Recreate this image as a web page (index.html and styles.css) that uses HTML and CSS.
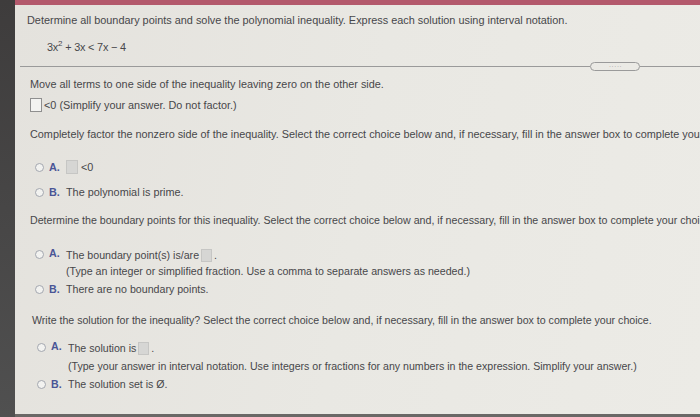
FILE: index.html
```html
<!DOCTYPE html>
<html lang="en">
<head>
<meta charset="utf-8">
<title>Polynomial inequality</title>
<link rel="stylesheet" href="styles.css">
</head>
<body>
<div class="screen">
  <div class="bezel"></div>
  <div class="page">
    <div class="topbar"></div>
    <div class="content">
      <div class="sec s1">
        <p class="line l1">Determine all boundary points and solve the polynomial inequality. Express each solution using interval notation.</p>
        <p class="line eq">3x<sup>2</sup> + 3x &lt; 7x − 4</p>
      </div>
      <div class="divider"><span class="rule short"></span><span class="pill">· · · · ·</span><span class="rule"></span></div>
      <div class="sec s2">
        <p class="line move">Move all terms to one side of the inequality leaving zero on the other side.</p>
        <p class="line simp"><span class="ansbox white"></span>&lt;0 (Simplify your answer. Do not factor.)</p>
        <p class="line q">Completely factor the nonzero side of the inequality. Select the correct choice below and, if necessary, fill in the answer box to complete your choice.</p>
        <div class="choice c1"><span class="radio"></span><span class="lbl">A.</span><span class="ansbox"></span><span>&lt;0</span></div>
        <div class="choice c2"><span class="radio"></span><span class="lbl">B.</span><span>The polynomial is prime.</span></div>
      </div>
      <div class="sec s3">
        <p class="line q q2">Determine the boundary points for this inequality. Select the correct choice below and, if necessary, fill in the answer box to complete your choice.</p>
        <div class="choice c3"><span class="radio"></span><span class="lbl">A.</span><div class="body"><div class="row">The boundary point(s) is/are <span class="ansbox small"></span>.</div><div class="row hint">(Type an integer or simplified fraction. Use a comma to separate answers as needed.)</div></div></div>
        <div class="choice c4"><span class="radio"></span><span class="lbl">B.</span><span>There are no boundary points.</span></div>
      </div>
      <div class="sec s4">
        <p class="line q q3">Write the solution for the inequality? Select the correct choice below and, if necessary, fill in the answer box to complete your choice.</p>
        <div class="choice c5"><span class="radio"></span><span class="lbl">A.</span><div class="body"><div class="row">The solution is <span class="ansbox small"></span>.</div><div class="row hint">(Type your answer in interval notation. Use integers or fractions for any numbers in the expression. Simplify your answer.)</div></div></div>
        <div class="choice c6"><span class="radio"></span><span class="lbl">B.</span><span>The solution set is Ø.</span></div>
      </div>
    </div>
    <div class="bottom"></div>
  </div>
</div>
</body>
</html>
```
FILE: styles.css
```css
html, body {
  margin: 0;
  padding: 0;
  width: 700px;
  height: 417px;
  overflow: hidden;
  background: #e8e6e1;
}
.screen {
  display: flex;
  width: 700px;
  height: 417px;
  font-family: "Liberation Sans", Arial, sans-serif;
  color: #47474a;
  font-size: 11px;
}
.bezel {
  width: 15px;
  flex: none;
  background: linear-gradient(to bottom, #3e3c3c, #505050);
}
.page {
  flex: 1;
  display: flex;
  flex-direction: column;
  background: linear-gradient(100deg, #e4e2dd 0%, #e9e8e3 50%, #ecebe6 100%);
  overflow: hidden;
}
.topbar {
  height: 5px;
  flex: none;
  background: #b3596c;
}
.content {
  flex: 1;
  padding-left: 12px;
  white-space: nowrap;
  overflow: hidden;
}
.s1 { font-size: 10.9px; }
.s2 { font-size: 10.85px; }
.s3 { font-size: 10.65px; }
.s4 { font-size: 10.6px; }
.bottom {
  height: 3px;
  background: #6a6866;
  flex: none;
}
.line {
  margin: 0;
  line-height: 13px;
}
.l1 { margin-top: 9px; }
.eq { margin-top: 14px; padding-left: 20px; letter-spacing: -0.2px; }
.eq sup { font-size: 8px; line-height: 0; }
.divider {
  display: flex;
  align-items: center;
  margin-top: 8px;
  height: 9px;
  margin-left: -7px;
}
.rule { flex: 1; height: 1px; background: #9a9a9a; }
.rule.short { flex: none; width: 570px; }
.pill {
  flex: none;
  width: 48px;
  height: 7px;
  border: 1px solid #9a9a9a;
  border-radius: 5px;
  font-size: 6px;
  line-height: 7px;
  text-align: center;
  color: #777;
  letter-spacing: -0.5px;
}
.move { margin-top: 7px; padding-left: 3px; }
.simp {
  margin-top: 7px;
  padding-left: 3px;
  display: flex;
  align-items: center;
  gap: 2px;
}
.ansbox {
  display: inline-block;
  width: 12px;
  height: 14px;
  background: #d6d6d4;
  border: 1px solid #c6c6c4;
  box-sizing: border-box;
  vertical-align: middle;
}
.ansbox.white {
  background: #f3f3f1;
  border-color: #8f8f8f;
}
.ansbox.small { width: 11px; height: 13px; }
.q { margin-top: 16px; padding-left: 3px; }
.choice {
  display: flex;
  align-items: center;
  padding-left: 8px;
  line-height: 13px;
}
.choice .radio {
  width: 7px;
  height: 7px;
  border: 1.5px solid #a3a7af;
  border-radius: 50%;
  background: #f2f2f0;
  flex: none;
  margin-right: 5px;
}
.choice .lbl {
  color: #4a5596;
  font-weight: bold;
  width: 17px;
  flex: none;
}
.c1 { margin-top: 19px; }
.c1 .ansbox { margin-right: 3px; }
.c2 { margin-top: 12px; }
.q2 { margin-top: 15px; }
.c3 { margin-top: 20px; align-items: flex-start; }
.c3 .radio, .c5 .radio { margin-top: 3px; }
.body .row { line-height: 17px; }
.body .row:first-child { display: flex; align-items: center; gap: 2px; }
.body .hint { line-height: 13px; margin-top: 1px; }
.c4 { margin-top: 5px; }
.q3 { margin-top: 18px; padding-left: 5px; }
.c5 { margin-top: 13px; align-items: flex-start; padding-left: 10px; }
.c5 .hint { margin-top: 3px; }
.c6 { margin-top: 5px; padding-left: 10px; }
```
